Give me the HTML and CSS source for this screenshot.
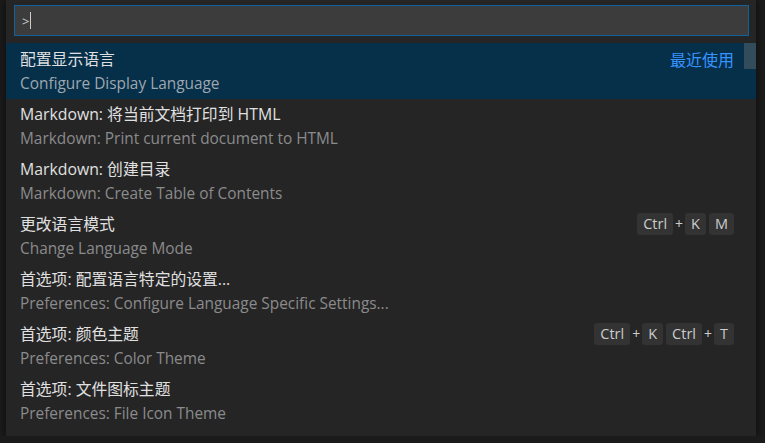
FILE: index.html
```html
<!DOCTYPE html>
<html lang="zh-CN">
<head>
  <meta charset="UTF-8" />
  <title>命令面板</title>
  <link rel="stylesheet" href="styles.css">
</head>
<body>
  <div class="quick-open">
    <div class="input-box">
      <span class="prefix">&gt;</span><span class="caret"></span>
    </div>
    <div class="list">
      <div class="scroll-thumb"></div>

      <div class="row selected">
        <div class="label-line">
          <span class="label">配置显示语言</span>
          <span class="recent">最近使用</span>
        </div>
        <div class="desc">Configure Display Language</div>
      </div>

      <div class="row">
        <div class="label-line"><span class="label">Markdown: 将当前文档打印到 HTML</span></div>
        <div class="desc">Markdown: Print current document to HTML</div>
      </div>

      <div class="row">
        <div class="label-line"><span class="label">Markdown: 创建目录</span></div>
        <div class="desc">Markdown: Create Table of Contents</div>
      </div>

      <div class="row">
        <div class="label-line">
          <span class="label">更改语言模式</span>
          <span class="keys"><kbd>Ctrl</kbd><i>+</i><kbd>K</kbd><kbd>M</kbd></span>
        </div>
        <div class="desc">Change Language Mode</div>
      </div>

      <div class="row">
        <div class="label-line"><span class="label">首选项: 配置语言特定的设置...</span></div>
        <div class="desc">Preferences: Configure Language Specific Settings...</div>
      </div>

      <div class="row">
        <div class="label-line">
          <span class="label">首选项: 颜色主题</span>
          <span class="keys"><kbd>Ctrl</kbd><i>+</i><kbd>K</kbd><kbd>Ctrl</kbd><i>+</i><kbd>T</kbd></span>
        </div>
        <div class="desc">Preferences: Color Theme</div>
      </div>

      <div class="row">
        <div class="label-line"><span class="label">首选项: 文件图标主题</span></div>
        <div class="desc">Preferences: File Icon Theme</div>
      </div>
    </div>
  </div>
</body>
</html>
```

FILE: styles.css
```css
body {
  margin: 0;
  background: #1b1b1b;
  font-family: 'Open Sans', 'Noto Sans CJK SC', sans-serif;
  color: #cccccc;
}
.quick-open {
  width: 750px;
  height: 436px;
  margin-left: 6px;
  background: #252526;
  box-shadow: 0 0 8px rgba(0, 0, 0, 0.6);
  overflow: hidden;
}
.input-box {
  height: 29px;
  margin: 5px 7px 0 8px;
  background: #3c3c3c;
  border: 1px solid #0e639c;
  display: flex;
  align-items: center;
  padding-left: 7px;
  font-size: 13px;
}
.prefix {
  color: #cccccc;
}
.caret {
  width: 1px;
  height: 17px;
  background: #cccccc;
  margin-left: 1px;
}
.list {
  position: relative;
  margin-top: 7px;
}
.scroll-thumb {
  position: absolute;
  right: 0;
  top: 0;
  width: 12px;
  height: 26px;
  background: rgba(121, 121, 121, 0.4);
}
.row {
  height: 55px;
  padding: 3px 22px 0 14px;
  box-sizing: border-box;
}
.row.selected {
  height: 56px;
  margin-bottom: -1px;
  background: #062f4a;
}
.label-line {
  display: flex;
  justify-content: space-between;
  align-items: center;
  height: 25px;
}
.label {
  font-size: 15.8px;
  color: #e0e0e0;
}
.desc {
  margin-top: 1px;
  height: 24px;
  line-height: 24px;
  font-size: 15.4px;
  color: #8b8b8b;
}
.selected .desc {
  color: #9ea7af;
}
.recent {
  font-size: 16px;
  color: #3794ff;
}
.keys {
  display: flex;
  align-items: center;
}
.keys kbd {
  font-family: 'Open Sans', sans-serif;
  font-size: 14.5px;
  background: #333333;
  border-radius: 3px;
  padding: 0 6px;
  height: 22px;
  line-height: 22px;
  color: #cccccc;
}
.keys kbd + kbd {
  margin-left: 3px;
}
.keys i {
  font-style: normal;
  font-size: 14px;
  color: #cccccc;
  margin: 0 2px;
}
```
